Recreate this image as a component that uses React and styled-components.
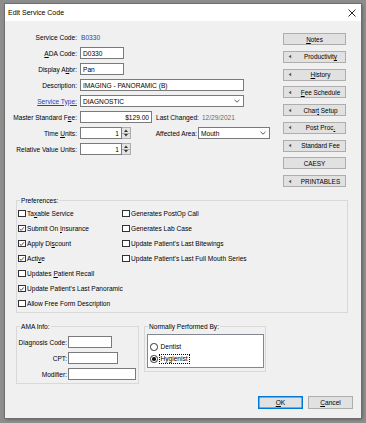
import React from 'react';
import styled, { createGlobalStyle } from 'styled-components';

const Global = createGlobalStyle`
  html, body { margin: 0; padding: 0; background: #8d8d8d; }
  body { font-family: "Liberation Sans", Arial, sans-serif; color: #000; }
  * { box-sizing: border-box; }
`;

const Screen = styled.div`
  width: 366px;
  height: 423px;
  padding: 4px 5px 5px 5px;
  background: #8d8d8d;
  display: flex;
`;

const Window = styled.div`
  flex: 1;
  display: flex;
  flex-direction: column;
  background: #f0f0f0;
  box-shadow: 0 0 0 1px #6e6e6e, 1px 1px 3px rgba(0, 0, 0, 0.45);
`;

const TitleBar = styled.div`
  height: 17px;
  background: #fff;
  display: flex;
  align-items: center;
  justify-content: space-between;
  padding: 0 5px 0 3px;
  font-size: 7px;
`;

const TopSection = styled.div`
  display: flex;
  justify-content: space-between;
  align-items: flex-start;
  margin-top: 10px;
  padding: 0 15px 0 5px;
`;

const FormGrid = styled.div`
  display: grid;
  grid-template-columns: 67px auto;
  grid-auto-rows: 12px;
  column-gap: 3px;
  row-gap: 4px;
  align-items: center;
`;

const Label = styled.div`
  font-size: 6.6px;
  text-align: right;
  white-space: nowrap;
  color: ${(p) => (p.$link ? '#2b3fc4' : '#000')};
  text-decoration: ${(p) => (p.$link ? 'underline' : 'none')};
  width: ${(p) => (p.$w ? `${p.$w}px` : 'auto')};
  margin-right: ${(p) => (p.$mr ? `${p.$mr}px` : '0')};
`;

const Field = styled.div`
  display: flex;
  align-items: center;
  height: 12px;
`;

const Value = styled.span`
  font-size: 6.6px;
  color: ${(p) => p.$color || '#000'};
  padding-left: ${(p) => (p.$pl ? `${p.$pl}px` : '0')};
  margin-left: ${(p) => (p.$ml ? `${p.$ml}px` : '0')};
  white-space: nowrap;
`;

const TextBox = styled.div`
  width: ${(p) => p.$w}px;
  height: ${(p) => p.$h || 12}px;
  border: 1px solid #7a7a7a;
  background: #fff;
  font-size: 6.6px;
  padding: 0 2px;
  display: flex;
  align-items: center;
  justify-content: ${(p) => (p.$right ? 'flex-end' : 'flex-start')};
  white-space: nowrap;
`;

const Combo = styled.div`
  width: ${(p) => p.$w}px;
  height: 12px;
  border: 1px solid #7a7a7a;
  background: #fff;
  font-size: 6.6px;
  padding: 0 3px 0 2px;
  display: flex;
  align-items: center;
  justify-content: space-between;
`;

const Spin = styled.div`
  display: flex;
  height: 12px;
`;

const SpinButtons = styled.div`
  width: 9px;
  display: flex;
  flex-direction: column;
  border: 1px solid #adadad;
  border-left: none;
`;

const SpinButton = styled.div`
  flex: 1;
  background: #e4e4e4;
  display: flex;
  align-items: center;
  justify-content: center;
  border-top: ${(p) => (p.$lower ? '1px solid #adadad' : 'none')};
`;

const ButtonColumn = styled.div`
  display: flex;
  flex-direction: column;
  gap: 5.75px;
  margin-top: 2px;
  width: 63px;
`;

const SideButton = styled.div`
  height: 12px;
  border: 1px solid #adadad;
  background: #e1e1e1;
  display: grid;
  grid-template-columns: ${(p) => (p.$arrow ? '8px 1fr' : '1fr')};
  align-items: center;
  padding-left: ${(p) => (p.$arrow ? '4px' : '0')};
  font-size: 6.4px;
  white-space: nowrap;
`;

const SideText = styled.span`
  text-align: center;
`;

const ArrowCell = styled.span`
  display: flex;
  align-items: center;
`;

const GroupBox = styled.div`
  position: relative;
  border: 1px solid #d9d9d9;
  width: ${(p) => p.$w}px;
  height: ${(p) => p.$h}px;
`;

const Legend = styled.span`
  position: absolute;
  top: -5px;
  left: 3px;
  padding: 0 1px;
  background: #f0f0f0;
  font-size: 6.6px;
  line-height: 9px;
  white-space: nowrap;
`;

const PrefGroup = styled(GroupBox)`
  margin: 13px 0 0 11px;
  display: flex;
  padding: 5px 0 0 1px;
`;

const CheckColumn = styled.div`
  display: flex;
  flex-direction: column;
  width: ${(p) => (p.$w ? `${p.$w}px` : 'auto')};
`;

const CheckRow = styled.div`
  height: 15px;
  display: flex;
  align-items: center;
  gap: 1.5px;
  font-size: 6.6px;
  white-space: nowrap;
`;

const Box = styled.span`
  width: 7.5px;
  height: 7.5px;
  border: 1px solid #333;
  background: #fff;
  display: flex;
  align-items: center;
  justify-content: center;
  flex-shrink: 0;
`;

const BottomRow = styled.div`
  display: flex;
  align-items: flex-start;
  gap: 5px;
  margin: 13px 0 0 11px;
`;

const AmaGrid = styled.div`
  display: grid;
  grid-template-columns: 50px auto;
  grid-auto-rows: 12px;
  column-gap: 1px;
  row-gap: 4px;
  align-items: center;
  padding-top: 9px;
`;

const ListBox = styled.div`
  margin: 7px 0 0 2px;
  width: 117px;
  height: 34px;
  background: #fff;
  border: 1px solid #828790;
  padding: 6px 0 0 2px;
  display: flex;
  flex-direction: column;
`;

const RadioRow = styled.div`
  height: 12px;
  display: flex;
  align-items: center;
  gap: 1px;
  font-size: 6.6px;
`;

const RadioCircle = styled.span`
  width: 7.5px;
  height: 7.5px;
  border-radius: 50%;
  border: 1px solid #333;
  background: #fff;
  display: flex;
  align-items: center;
  justify-content: center;
  flex-shrink: 0;
`;

const RadioDot = styled.span`
  width: 3.5px;
  height: 3.5px;
  border-radius: 50%;
  background: #111;
`;

const RadioText = styled.span`
  border: 1px ${(p) => (p.$focus ? 'dotted #000' : 'solid transparent')};
  padding: 0 1px;
  line-height: 8px;
`;

const Footer = styled.div`
  display: flex;
  justify-content: flex-end;
  gap: 5px;
  margin-top: 12px;
  padding-right: 8px;
`;

const DialogButton = styled.div`
  width: 45px;
  height: 13px;
  background: #e1e1e1;
  border: 1px solid ${(p) => (p.$default ? '#0078d7' : '#adadad')};
  box-shadow: ${(p) => (p.$default ? 'inset 0 0 0 0.5px #0078d7' : 'none')};
  display: flex;
  align-items: center;
  justify-content: center;
  font-size: 6.6px;
`;

const Chevron = () => (
  <svg width="6" height="4" viewBox="0 0 6 4">
    <polyline points="0.5,0.8 3,3.2 5.5,0.8" fill="none" stroke="#333" strokeWidth="0.8" />
  </svg>
);

const SmallArrow = () => (
  <svg width="4" height="5" viewBox="0 0 4 5">
    <polygon points="3.2,0.7 0.6,2.5 3.2,4.3" fill="#555" />
  </svg>
);

const Check = () => (
  <svg width="6" height="6" viewBox="0 0 6 6">
    <polyline points="0.8,3 2.4,4.6 5.3,1.2" fill="none" stroke="#222" strokeWidth="0.9" />
  </svg>
);

const Tri = ({ up }) => (
  <svg width="4" height="3" viewBox="0 0 4 3">
    <polygon points={up ? '0,3 2,0.5 4,3' : '0,0 2,2.5 4,0'} fill="#333" />
  </svg>
);

const CloseX = () => (
  <svg width="8" height="8" viewBox="0 0 8 8">
    <line x1="0.5" y1="0.5" x2="7.5" y2="7.5" stroke="#111" strokeWidth="0.9" />
    <line x1="7.5" y1="0.5" x2="0.5" y2="7.5" stroke="#111" strokeWidth="0.9" />
  </svg>
);

const Spinner = ({ value }) => (
  <Spin>
    <TextBox $w={42} $right>{value}</TextBox>
    <SpinButtons>
      <SpinButton><Tri up /></SpinButton>
      <SpinButton $lower><Tri /></SpinButton>
    </SpinButtons>
  </Spin>
);

const sideButtons = [
  { label: <><u>N</u>otes</>, arrow: false },
  { label: <>Productivit<u>y</u></>, arrow: true },
  { label: <><u>H</u>istory</>, arrow: true },
  { label: <><u>F</u>ee Schedule</>, arrow: true },
  { label: <>Char<u>t</u> Setup</>, arrow: true },
  { label: <>Post Proc<u>.</u></>, arrow: true },
  { label: <>Standard Fee</>, arrow: true },
  { label: <>CAESY</>, arrow: false },
  { label: <>PRINTABLES</>, arrow: true },
];

const leftChecks = [
  { label: <>Ta<u>x</u>able Service</>, checked: false },
  { label: <>Submit On <u>I</u>nsurance</>, checked: true },
  { label: <>Apply Di<u>s</u>count</>, checked: true },
  { label: <>Acti<u>v</u>e</>, checked: true },
  { label: <>Updates <u>P</u>atient Recall</>, checked: false },
  { label: <>Update Patient's Last Panoramic</>, checked: true },
  { label: <>Allow Free Form Description</>, checked: false },
];

const rightChecks = [
  { label: 'Generates PostOp Call', checked: false },
  { label: 'Generates Lab Case', checked: false },
  { label: "Update Patient's Last Bitewings", checked: false },
  { label: "Update Patient's Last Full Mouth Series", checked: false },
];

const CheckItem = ({ label, checked }) => (
  <CheckRow>
    <Box>{checked && <Check />}</Box>
    <span>{label}</span>
  </CheckRow>
);

export default function App() {
  return (
    <>
      <Global />
      <Screen>
        <Window>
          <TitleBar>
            <span>Edit Service Code</span>
            <CloseX />
          </TitleBar>

          <TopSection>
            <FormGrid>
              <Label>Service Code:</Label>
              <Field><Value $color="#2b3fa8" $pl={1}>B0330</Value></Field>

              <Label><u>A</u>DA Code:</Label>
              <Field><TextBox $w={44}>D0330</TextBox></Field>

              <Label>Display A<u>b</u>br:</Label>
              <Field><TextBox $w={44}>Pan</TextBox></Field>

              <Label>Description:</Label>
              <Field><TextBox $w={164}>IMAGING - PANORAMIC (B)</TextBox></Field>

              <Label $link>Service Type:</Label>
              <Field><Combo $w={164}><span>DIAGNOSTIC</span><Chevron /></Combo></Field>

              <Label>Master Standard F<u>e</u>e:</Label>
              <Field>
                <TextBox $w={72} $right>$129.00</TextBox>
                <Value $ml={4}>Last Changed:</Value>
                <Value $ml={3} $color="#6d6d6d">12/29/2021</Value>
              </Field>

              <Label>Time <u>U</u>nits:</Label>
              <Field>
                <Spinner value="1" />
                <Label $w={66} $mr={1}>Affected Area:</Label>
                <Combo $w={72}><span>Mouth</span><Chevron /></Combo>
              </Field>

              <Label>Relative Value Units:</Label>
              <Field><Spinner value="1" /></Field>
            </FormGrid>

            <ButtonColumn>
              {sideButtons.map((b, i) => (
                <SideButton key={i} $arrow={b.arrow}>
                  {b.arrow && <ArrowCell><SmallArrow /></ArrowCell>}
                  <SideText>{b.label}</SideText>
                </SideButton>
              ))}
            </ButtonColumn>
          </TopSection>

          <PrefGroup $w={332} $h={113}>
            <Legend>Preferences:</Legend>
            <CheckColumn $w={104}>
              {leftChecks.map((c, i) => <CheckItem key={i} {...c} />)}
            </CheckColumn>
            <CheckColumn>
              {rightChecks.map((c, i) => <CheckItem key={i} {...c} />)}
            </CheckColumn>
          </PrefGroup>

          <BottomRow>
            <GroupBox $w={123} $h={58}>
              <Legend>AMA Info:</Legend>
              <AmaGrid>
                <Label>Diagnosis Code:</Label>
                <Field><TextBox $w={44} /></Field>
                <Label>CPT:</Label>
                <Field><TextBox $w={50} /></Field>
                <Label>Modifier:</Label>
                <Field><TextBox $w={68} /></Field>
              </AmaGrid>
            </GroupBox>

            <GroupBox $w={122} $h={46}>
              <Legend>Normally Performed By:</Legend>
              <ListBox>
                <RadioRow>
                  <RadioCircle />
                  <RadioText>Dentist</RadioText>
                </RadioRow>
                <RadioRow>
                  <RadioCircle><RadioDot /></RadioCircle>
                  <RadioText $focus>Hygienist</RadioText>
                </RadioRow>
              </ListBox>
            </GroupBox>
          </BottomRow>

          <Footer>
            <DialogButton $default><u>O</u>K</DialogButton>
            <DialogButton><u>C</u>ancel</DialogButton>
          </Footer>
        </Window>
      </Screen>
    </>
  );
}
